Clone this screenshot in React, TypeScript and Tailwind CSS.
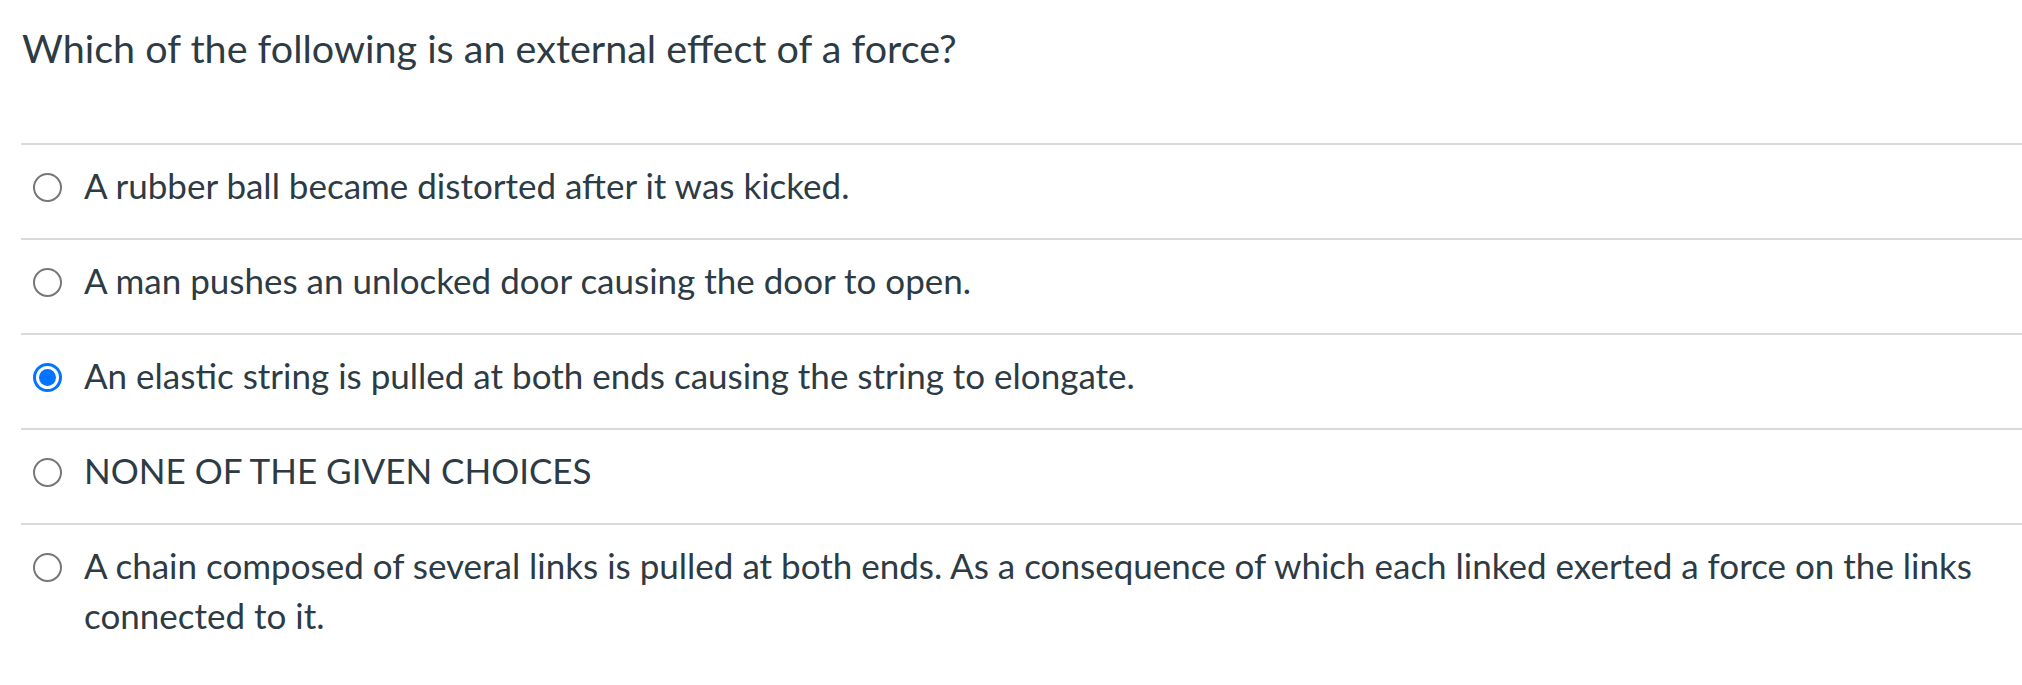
import React from "react";

const options = [
  { text: "A rubber ball became distorted after it was kicked.", selected: false },
  { text: "A man pushes an unlocked door causing the door to open.", selected: false },
  { text: "An elastic string is pulled at both ends causing the string to elongate.", selected: true },
  { text: "NONE OF THE GIVEN CHOICES", selected: false },
  {
    text: "A chain composed of several links is pulled at both ends. As a consequence of which each linked exerted a force on the links connected to it.",
    selected: false,
  },
];

function Radio({ selected }: { selected: boolean }) {
  if (selected) {
    return (
      <span className="mt-[13px] flex h-[29px] w-[29px] shrink-0 items-center justify-center rounded-full border-[3px] border-[#0374ff] bg-white">
        <span className="h-[17px] w-[17px] rounded-full bg-[#0374ff]" />
      </span>
    );
  }
  return <span className="mt-[13px] block h-[29px] w-[29px] shrink-0 rounded-full border-2 border-[#777777] bg-white" />;
}

export default function App() {
  return (
    <div className="min-h-[685px] w-full bg-white text-[#2d3b45]" style={{ fontFamily: "Lato, 'Noto Sans', sans-serif" }}>
      <div className="pl-[22px] pt-[20px] text-[39.5px] leading-[56px]">Which of the following is an external effect of a force?</div>
      <div className="ml-[21px] mt-[67px]">
        {options.map((o, i) => (
          <div key={i} className="flex items-start border-t-2 border-[#dadada] pb-[28px] pl-[12px] pr-[40px] pt-[15px]">
            <Radio selected={o.selected} />
            <div className="ml-[22px] text-[35px] leading-[50px]">{o.text}</div>
          </div>
        ))}
      </div>
    </div>
  );
}
